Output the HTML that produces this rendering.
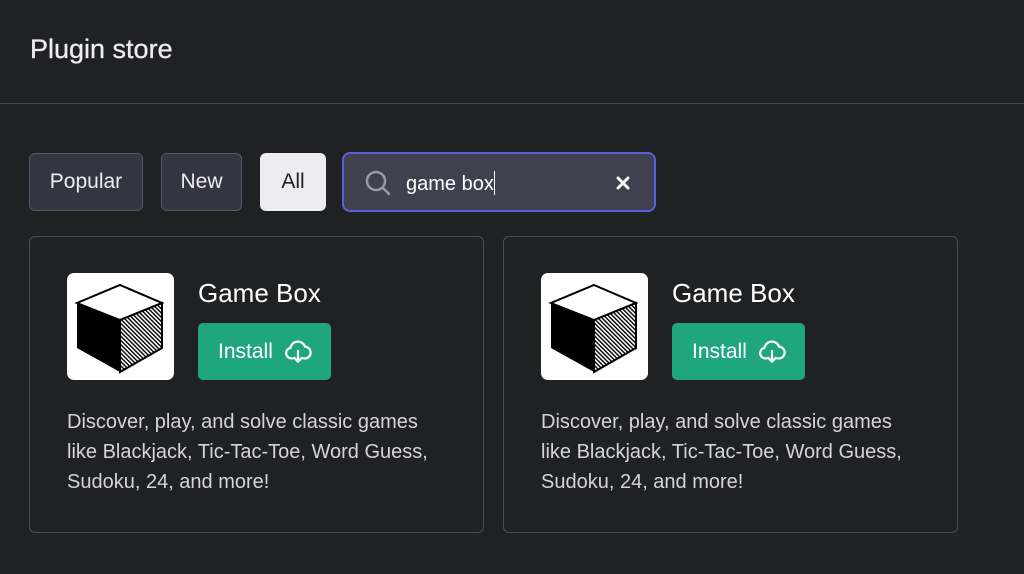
<!DOCTYPE html>
<html><head><meta charset="utf-8"><style>
*{box-sizing:border-box;margin:0;padding:0}
body{width:1024px;height:574px;background:#202123;font-family:"Liberation Sans",sans-serif;color:#ececf1;position:relative;overflow:hidden}
.t{position:absolute;left:30px;top:34px;font-size:27px;color:#ececf1;-webkit-text-stroke:0.3px #ececf1}
.hr{position:absolute;left:0;top:103px;width:1024px;height:1px;background:#4a4b52}
.b{position:absolute;top:153px;height:58px;border:1px solid #565869;border-radius:6px;background:#343541;font-size:21px;color:#ececf1;display:flex;align-items:center;justify-content:center}
.s{position:absolute;left:342px;top:152px;width:314px;height:60px;border:2px solid #5a5fe0;border-radius:8px;background:#40414f}
.card{position:absolute;top:236px;width:455px;height:297px;border:1px solid #4d4e55;border-radius:6px}
.ic{position:absolute;left:37px;top:36px;width:107px;height:107px;background:#fff;border-radius:7px;overflow:hidden}
.nm{position:absolute;left:168px;top:41px;font-size:26px;color:#fff}
.ins{position:absolute;left:168px;top:86px;width:133px;height:57px;background:#1fa67f;border-radius:5px;color:#fff;font-size:21px;display:flex;align-items:center;padding-left:20px}
.ins svg{margin-left:11px}
.d{position:absolute;left:37px;top:170px;width:385px;font-size:20px;line-height:30px;color:#d4d4da}
</style></head><body>
<div class="t">Plugin store</div>
<div class="hr"></div>
<div class="b" style="left:29px;width:114px">Popular</div>
<div class="b" style="left:161px;width:81px">New</div>
<div class="b" style="left:260px;width:66px;background:#ececf1;color:#202123;border-color:#ececf1">All</div>
<div class="s">
<svg style="position:absolute;left:20px;top:15px" width="28" height="28" viewBox="0 0 28 28" fill="none" stroke="#9a9aa5" stroke-width="2.5"><circle cx="12" cy="12" r="9"/><path d="M19 19l6 6" stroke-linecap="round"/></svg>
<div style="position:absolute;left:62px;top:17px;font-size:20px;color:#fff">game box<span style="display:inline-block;width:1px;height:24px;background:#fff;vertical-align:-5px"></span></div>
<svg style="position:absolute;left:272px;top:22px" width="14" height="14" viewBox="0 0 14 14" stroke="#fff" stroke-width="3" stroke-linecap="round"><path d="M2 2l10 10M12 2L2 12"/></svg>
</div>
<svg width="0" height="0" style="position:absolute"><defs><pattern id="h" width="3" height="3" patternUnits="userSpaceOnUse" patternTransform="rotate(-45)"><rect width="3" height="3" fill="#fff"/><rect width="1.4" height="3" fill="#000"/></pattern></defs></svg>
<div class="card" style="left:29px">
<div class="ic"><svg width="107" height="107" viewBox="67 273 107 107"><path d="M120 285L162 303L120 320L77 303Z" fill="#fff" stroke="#000" stroke-width="2"/><path d="M77 303L120 320L120 372L77 348Z" fill="#000"/><path d="M120 320L162 303L162 348L120 372Z" fill="url(#h)" stroke="#000" stroke-width="2"/></svg></div>
<div class="nm">Game Box</div>
<div class="ins">Install<svg width="28" height="26" viewBox="0 0 26 24" fill="none" stroke="#fff" stroke-width="2" stroke-linecap="round" stroke-linejoin="round"><path d="M8 18H7a5 5 0 0 1-1-9.9A7 7 0 0 1 19.5 7 5 5 0 0 1 19 18h-1"/><path d="M13 11v10M9.5 17.5L13 21l3.5-3.5"/></svg></div>
<div class="d">Discover, play, and solve classic games like Blackjack, Tic-Tac-Toe, Word Guess, Sudoku, 24, and more!</div>
</div>
<div class="card" style="left:503px">
<div class="ic"><svg width="107" height="107" viewBox="67 273 107 107"><path d="M120 285L162 303L120 320L77 303Z" fill="#fff" stroke="#000" stroke-width="2"/><path d="M77 303L120 320L120 372L77 348Z" fill="#000"/><path d="M120 320L162 303L162 348L120 372Z" fill="url(#h)" stroke="#000" stroke-width="2"/></svg></div>
<div class="nm">Game Box</div>
<div class="ins">Install<svg width="28" height="26" viewBox="0 0 26 24" fill="none" stroke="#fff" stroke-width="2" stroke-linecap="round" stroke-linejoin="round"><path d="M8 18H7a5 5 0 0 1-1-9.9A7 7 0 0 1 19.5 7 5 5 0 0 1 19 18h-1"/><path d="M13 11v10M9.5 17.5L13 21l3.5-3.5"/></svg></div>
<div class="d">Discover, play, and solve classic games like Blackjack, Tic-Tac-Toe, Word Guess, Sudoku, 24, and more!</div>
</div>
</body></html>
